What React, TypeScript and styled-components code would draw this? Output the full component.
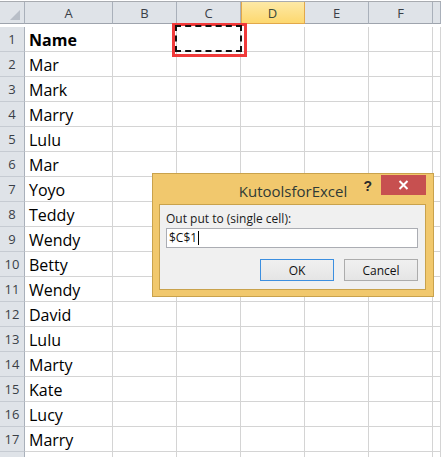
import * as React from "react";
import styled, { createGlobalStyle, css } from "styled-components";

const names = [
  "Name",
  "Mar",
  "Mark",
  "Marry",
  "Lulu",
  "Mar",
  "Yoyo",
  "Teddy",
  "Wendy",
  "Betty",
  "Wendy",
  "David",
  "Lulu",
  "Marty",
  "Kate",
  "Lucy",
  "Marry",
];

const columns = ["A", "B", "C", "D", "E", "F", ""];
const activeColumn = "D";

const App = () => {
  return (
    <>
      <GlobalStyle />
      <SPage>
        <STopStrip />
        <SSheet>
          <SCorner>
            <STriangle />
          </SCorner>
          {columns.map((col, i) => (
            <SColHeader key={i} $active={col === activeColumn}>
              {col}
            </SColHeader>
          ))}
          {names.map((name, r) => (
            <React.Fragment key={r}>
              <SRowHeader>{r + 1}</SRowHeader>
              <SCell $bold={r === 0}>{name}</SCell>
              {columns.slice(1).map((_, c) => (
                <SCell key={c} />
              ))}
            </React.Fragment>
          ))}
          {/* last row is only partly on screen, its number stays hidden */}
          <SRowHeader />
          {columns.map((_, c) => (
            <SCell key={c} />
          ))}
        </SSheet>

        <SHighlight />
        <SMarquee />

        <SDialog>
          <STitleBar>
            <span />
            <STitle>KutoolsforExcel</STitle>
            <SCaptionButtons>
              <SHelp>?</SHelp>
              <SClose>
                <svg width="11" height="10" viewBox="0 0 11 10">
                  <path
                    d="M1.5 1 L9.5 9 M9.5 1 L1.5 9"
                    stroke="#fff"
                    strokeWidth="2"
                  />
                </svg>
              </SClose>
            </SCaptionButtons>
          </STitleBar>
          <SPanel>
            <SLabel>Out put to (single cell):</SLabel>
            <SInput>
              $C$1
              <SCaret />
            </SInput>
            <SButtons>
              <SButton $focused>OK</SButton>
              <SButton>Cancel</SButton>
            </SButtons>
          </SPanel>
        </SDialog>
      </SPage>
    </>
  );
};

export default App;

const GlobalStyle = createGlobalStyle`
  html, body {
    margin: 0;
    padding: 0;
    background: #fff;
    overflow: hidden;
  }
  * {
    box-sizing: border-box;
  }
`;

const SPage = styled.div`
  position: relative;
  width: 441px;
  height: 457px;
  overflow: hidden;
  background: #fff;
  font-family: "Open Sans", "Liberation Sans", sans-serif;
`;

const STopStrip = styled.div`
  height: 2px;
  border-bottom: 1px solid #a8abb0;
  background: #fff;
`;

const SSheet = styled.div`
  display: grid;
  grid-template-columns: 25px 88px repeat(5, 64px) 1fr;
  grid-auto-rows: 25px;
`;

const headerBase = css`
  background: #dfe3e8;
  border-right: 1px solid #a9b0ba;
  border-bottom: 1px solid #9ea4ad;
  color: #3a3f47;
  font-size: 13px;
  display: flex;
  align-items: center;
  justify-content: center;
`;

const SCorner = styled.div`
  ${headerBase};
  height: 22px;
  position: relative;
`;

const STriangle = styled.div`
  position: absolute;
  right: 4px;
  bottom: 3px;
  width: 0;
  height: 0;
  border-left: 10px solid transparent;
  border-bottom: 10px solid #b8bec7;
`;

const SColHeader = styled.div<{ $active?: boolean }>`
  ${headerBase};
  height: 22px;
  ${(p) =>
    p.$active &&
    css`
      background: linear-gradient(#fde9a6, #fdd86f);
      border-right-color: #e2a84a;
      border-bottom-color: #e2a84a;
      box-shadow: inset 1px 0 0 #e2a84a;
      color: #3b4a3a;
    `}
`;

const SRowHeader = styled.div`
  ${headerBase};
  align-items: flex-end;
  padding-bottom: 3px;
  border-bottom-color: #c6cbd2;
`;

const SCell = styled.div<{ $bold?: boolean }>`
  border-right: 1px solid #d4d4d4;
  border-bottom: 1px solid #d4d4d4;
  font-size: 16px;
  line-height: 20px;
  color: #000;
  padding: 0 0 1px 4px;
  display: flex;
  align-items: flex-end;
  white-space: nowrap;
  font-weight: ${(p) => (p.$bold ? 700 : 400)};
`;

const SHighlight = styled.div`
  position: absolute;
  left: 172px;
  top: 23px;
  width: 75px;
  height: 34px;
  border: 3px solid #f03a3a;
`;

const SMarquee = styled.div`
  position: absolute;
  left: 175px;
  top: 25px;
  width: 67px;
  height: 27px;
  border: 2px dashed #111;
`;

const SDialog = styled.div`
  position: absolute;
  left: 152px;
  top: 173px;
  width: 282px;
  height: 124px;
  background: #f1c86d;
  border: 1px solid #c9a24c;
  display: flex;
  flex-direction: column;
`;

const STitleBar = styled.div`
  height: 30px;
  display: grid;
  grid-template-columns: 1fr auto 1fr;
  align-items: start;
`;

const STitle = styled.div`
  font-family: "Open Sans", "Liberation Sans", sans-serif;
  font-size: 15px;
  color: #2f3a36;
  padding-top: 7px;
`;

const SCaptionButtons = styled.div`
  display: flex;
  justify-content: flex-end;
  align-items: flex-start;
  gap: 9px;
  padding: 1px 7px 0 0;
`;

const SHelp = styled.span`
  font-family: "Liberation Sans", sans-serif;
  font-weight: 700;
  font-size: 14px;
  color: #2b2b2b;
  padding-top: 3px;
`;

const SClose = styled.div`
  width: 45px;
  height: 20px;
  background: #c75050;
  display: flex;
  align-items: center;
  justify-content: center;
`;

const SPanel = styled.div`
  margin: 0 7px 0 6px;
  height: 86px;
  background: #f0f0f0;
  border: 1px solid #c9a24c;
  padding: 6px 7px 0 6px;
  display: flex;
  flex-direction: column;
`;

const SLabel = styled.div`
  font-size: 12px;
  line-height: 16px;
  color: #1a1a1a;
  height: 17px;
`;

const SInput = styled.div`
  height: 20px;
  background: #fff;
  border: 1px solid #abadb3;
  font-size: 12px;
  line-height: 18px;
  padding-left: 2px;
  color: #111;
  display: flex;
  align-items: center;
`;

const SCaret = styled.span`
  display: inline-block;
  width: 1px;
  height: 14px;
  background: #000;
  margin-left: 1px;
`;

const SButtons = styled.div`
  display: flex;
  justify-content: flex-end;
  gap: 10px;
  margin-top: 11px;
`;

const SButton = styled.div<{ $focused?: boolean }>`
  width: 74px;
  height: 22px;
  border: 1px solid ${(p) => (p.$focused ? "#3c8fe0" : "#acacac")};
  background: linear-gradient(#f0f0f0, #e5e5e5);
  font-size: 12px;
  color: #111;
  display: flex;
  align-items: center;
  justify-content: center;
`;
